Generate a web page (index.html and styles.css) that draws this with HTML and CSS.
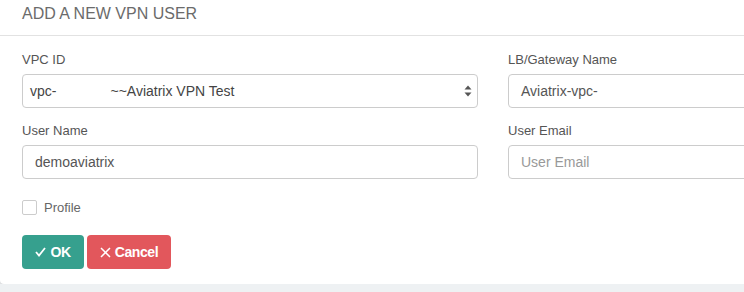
FILE: index.html
```html
<!DOCTYPE html>
<html>
<head>
<meta charset="utf-8">
<link rel="stylesheet" href="styles.css">
</head>
<body>
<div class="card">
  <div class="card-header">ADD A NEW VPN USER</div>
  <div class="card-body">
    <div class="grid">
      <div class="form-group">
        <label class="label">VPC ID</label>
        <div class="select">
          <span class="sel-text"><span>vpc-</span><span class="sel-name">~~Aviatrix VPN Test</span></span>
          <svg class="sel-arrows" width="8" height="12" viewBox="0 0 8 12"><polygon points="4,0.5 7.5,4.5 0.5,4.5" fill="#555"/><polygon points="0.5,7.5 7.5,7.5 4,11.5" fill="#555"/></svg>
        </div>
      </div>
      <div class="form-group">
        <label class="label">LB/Gateway Name</label>
        <div class="input">Aviatrix-vpc-</div>
      </div>
      <div class="form-group">
        <label class="label">User Name</label>
        <div class="input">demoaviatrix</div>
      </div>
      <div class="form-group">
        <label class="label">User Email</label>
        <div class="input placeholder">User Email</div>
      </div>
    </div>
    <div class="check-row">
      <span class="checkbox"></span>
      <span class="check-label">Profile</span>
    </div>
    <div class="buttons">
      <button class="btn btn-ok"><svg width="11" height="10" viewBox="0 0 11 10"><polyline points="1,5 4,8.5 10,1" fill="none" stroke="#fff" stroke-width="1.8"/></svg>OK</button>
      <button class="btn btn-cancel"><svg width="11" height="11" viewBox="0 0 11 11"><path d="M1,1 L10,10 M10,1 L1,10" fill="none" stroke="#fff" stroke-width="1.5"/></svg>Cancel</button>
    </div>
  </div>
</div>
</body>
</html>
```

FILE: styles.css
```css
html, body {
  margin: 0;
  padding: 0;
  overflow: hidden;
  background: #eef1f3;
  font-family: "Liberation Sans", Arial, sans-serif;
}
.card {
  width: 1000px;
  background: #fff;
  border-radius: 0 0 4px 4px;
  box-shadow: 0 1px 3px rgba(0,0,0,0.18);
}
.card-header {
  height: 35px;
  line-height: 28px;
  padding: 0 22px;
  font-size: 16px;
  color: #6b6b6b;
  border-bottom: 1px solid #e2e2e2;
}
.card-body {
  padding: 15px 22px 15px;
}
.grid {
  display: grid;
  grid-template-columns: 456px 456px;
  column-gap: 30px;
}
.form-group {
  margin-bottom: 14px;
}
.label {
  display: block;
  font-size: 13px;
  line-height: 18px;
  color: #555;
  margin-bottom: 5px;
}
.input, .select {
  box-sizing: border-box;
  height: 34px;
  border: 1px solid #ccc;
  border-radius: 4px;
  font-size: 14px;
  line-height: 32px;
  color: #555;
  padding: 0 12px;
  background: #fff;
}
.placeholder {
  color: #999;
}
.select {
  display: flex;
  justify-content: space-between;
  align-items: center;
  padding: 0 5px 0 7px;
  color: #444;
}
.sel-name {
  margin-left: 54px;
}
.sel-arrows {
  display: block;
}
.check-row {
  display: flex;
  align-items: center;
  margin-top: 7px;
  height: 15px;
}
.checkbox {
  box-sizing: border-box;
  width: 15px;
  height: 15px;
  border: 1px solid #ccc;
  border-radius: 2px;
  background: #fff;
}
.check-label {
  margin-left: 7px;
  font-size: 13px;
  color: #666;
}
.buttons {
  display: flex;
  gap: 3px;
  margin-top: 20px;
}
.btn {
  box-sizing: border-box;
  height: 34px;
  border: none;
  border-radius: 4px;
  color: #fff;
  font-family: "Liberation Sans", Arial, sans-serif;
  font-size: 14px;
  font-weight: bold;
  letter-spacing: -0.4px;
  display: flex;
  align-items: center;
  justify-content: center;
  padding: 0;
}
.btn svg {
  flex-shrink: 0;
  margin-right: 4px;
}
.btn-ok {
  width: 62px;
  background: #36a08e;
}
.btn-cancel {
  width: 84px;
  background: #e2575c;
}
```
